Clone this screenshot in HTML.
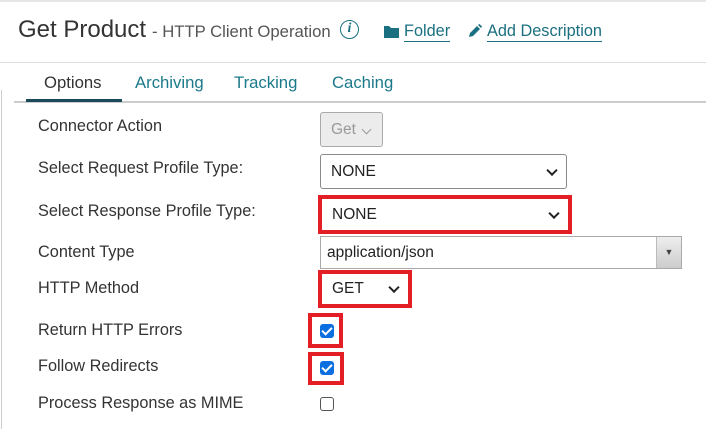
<!DOCTYPE html>
<html><head><style>
*{margin:0;padding:0;box-sizing:border-box}
body{width:706px;height:429px;background:#fff;position:relative;overflow:hidden;font-family:"Liberation Sans",sans-serif;color:#333}
.a{position:absolute;white-space:nowrap}
.lbl{position:absolute;left:38px;font-size:16.3px;color:#333}
.sel{position:absolute;border:1px solid #8a8a8a;border-radius:3px;background:#fff;font-size:15.5px;color:#222;padding-left:10px;display:flex;align-items:center}
.chev{position:absolute;right:10px;top:50%;width:8px;height:8px;border-right:2px solid #222;border-bottom:2px solid #222;transform:translateY(-70%) rotate(45deg)}
.red{position:absolute;border:4px solid #e31e24}
.cb{position:absolute;width:14px;height:14px;border-radius:3px}
.on{background:#0b6fe0}
.on:after{content:"";position:absolute;left:4px;top:1px;width:4px;height:8px;border-right:2px solid #fff;border-bottom:2px solid #fff;transform:rotate(45deg)}
.off{border:1px solid #555;background:#fff}
</style></head><body>
<div class="a" style="left:0;top:0;width:706px;height:2px;background:#e6e6e6"></div>
<div class="a" style="left:18px;top:16px;font-size:24px;color:#333">Get Product</div>
<div class="a" style="left:152px;top:22px;font-size:16.7px;color:#555">- HTTP Client Operation</div>
<div class="a" style="left:340px;top:20px;width:19px;height:19px;border:1.5px solid #1a6f80;border-radius:50%;font-family:'Liberation Serif',serif;font-style:italic;font-weight:bold;font-size:14px;color:#1a6f80;text-align:center;line-height:16px">i</div>
<svg class="a" style="left:384px;top:25px" width="15" height="13" viewBox="0 0 15 13"><path d="M0 1h5l2 2h8v10H0z" fill="#1a6f80"/></svg>
<div class="a" style="left:404px;top:21px;font-size:16.3px;color:#1a6f80;border-bottom:1.5px solid #1a6f80;line-height:20px">Folder</div>
<svg class="a" style="left:468px;top:24px" width="14" height="14" viewBox="0 0 14 14"><path d="M1 13l1-4 7-7 3 3-7 7z M10 1l1.5-1 2.5 2.5-1 1.5z" fill="#1a6f80"/></svg>
<div class="a" style="left:487px;top:21px;font-size:16.3px;color:#1a6f80;border-bottom:1.5px solid #1a6f80;line-height:20px">Add Description</div>
<div class="a" style="left:0;top:62px;width:706px;height:1px;background:#ddd"></div>
<div class="a" style="left:14px;top:101px;width:692px;height:2px;background:#ccc"></div>
<div class="a" style="left:1px;top:90px;width:1px;height:339px;background:#ccc"></div>
<div class="a" style="left:26px;top:99px;width:96px;height:3px;background:#1d4a5a"></div>
<div class="a" style="left:44px;top:73px;font-size:16.7px;color:#333">Options</div>
<div class="a" style="left:135px;top:73px;font-size:16.7px;color:#1a7a8a">Archiving</div>
<div class="a" style="left:234px;top:73px;font-size:16.7px;color:#1a7a8a">Tracking</div>
<div class="a" style="left:332px;top:73px;font-size:16.7px;color:#1a7a8a">Caching</div>

<div class="lbl" style="top:117px">Connector Action</div>
<div class="lbl" style="top:159px">Select Request Profile Type:</div>
<div class="lbl" style="top:202px">Select Response Profile Type:</div>
<div class="lbl" style="top:243px">Content Type</div>
<div class="lbl" style="top:279px">HTTP Method</div>
<div class="lbl" style="top:321px">Return HTTP Errors</div>
<div class="lbl" style="top:357px">Follow Redirects</div>
<div class="lbl" style="top:394px">Process Response as MIME</div>

<div class="sel" style="left:320px;top:112px;width:63px;height:35px;background:#ececec;border-color:#aaa;color:#999">Get<span style="position:absolute;right:12px;top:13px;width:7px;height:7px;border-right:1.5px solid #999;border-bottom:1.5px solid #999;transform:rotate(45deg)"></span></div>
<div class="sel" style="left:320px;top:154px;width:247px;height:35px">NONE<span class="chev"></span></div>
<div class="red" style="left:318px;top:195px;width:254px;height:39px"></div>
<div class="sel" style="left:322px;top:199px;width:246px;height:31px;border:none">NONE<span class="chev"></span></div>
<div class="sel" style="left:320px;top:236px;width:362px;height:33px;border-radius:0;padding-left:6px;border-color:#aaa">application/json
<div style="position:absolute;right:0;top:0;width:25px;height:31px;background:linear-gradient(#eee,#ccc);border-left:1px solid #bbb;font-size:9px;color:#444;text-align:center;line-height:31px">▼</div></div>
<div class="red" style="left:318px;top:270px;width:94px;height:38px"></div>
<div class="sel" style="left:322px;top:274px;width:86px;height:30px;border:none">GET<span class="chev"></span></div>
<div class="red" style="left:308px;top:313px;width:35px;height:35px"></div>
<div class="cb on" style="left:320px;top:324px"></div>
<div class="red" style="left:308px;top:352px;width:36px;height:33px"></div>
<div class="cb on" style="left:320px;top:361px"></div>
<div class="cb off" style="left:320px;top:397px"></div>
</body></html>
